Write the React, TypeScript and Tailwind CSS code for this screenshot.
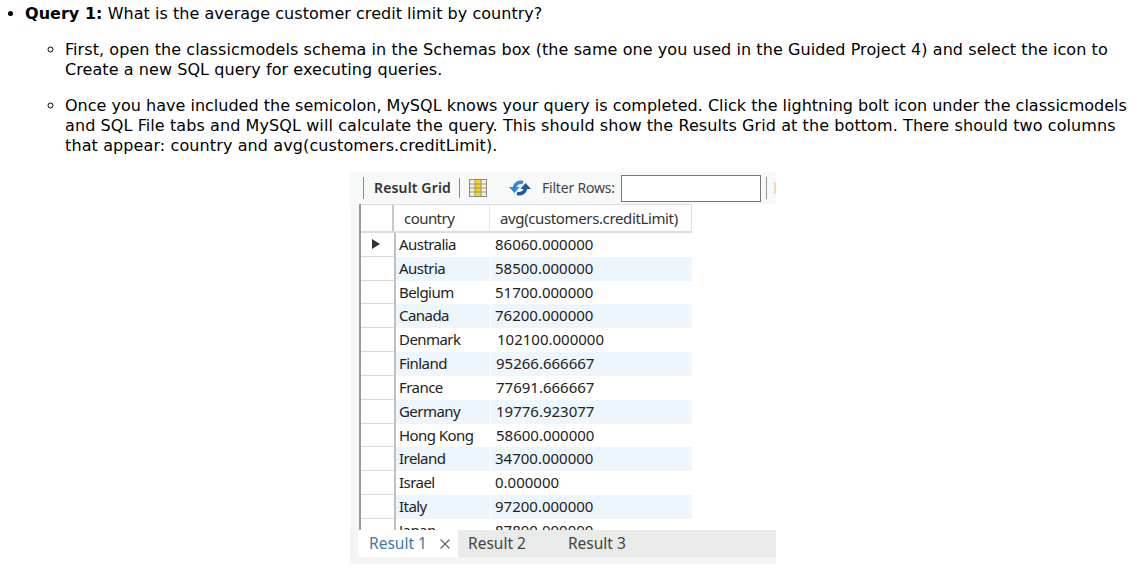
const rows: [string, string, string?][] = [
  ["Australia", "86060.000000"],
  ["Austria", "58500.000000"],
  ["Belgium", "51700.000000"],
  ["Canada", "76200.000000"],
  ["Denmark", "102100.000000", "ml-[2px]"],
  ["Finland", "95266.666667", "ml-[1px]"],
  ["France", "77691.666667", "ml-[1px]"],
  ["Germany", "19776.923077", "ml-[1px]"],
  ["Hong Kong", "58600.000000", "ml-[1px]"],
  ["Ireland", "34700.000000"],
  ["Israel", "0.000000"],
  ["Italy", "97200.000000"],
  ["Japan", "87800.000000"],
];

function Grid() {
  return (
    <div className="h-[326px] w-[333px] overflow-hidden border-l-2 border-[#9a9a9a] bg-white">
      <div className="flex h-[29px] border-y border-b-2 border-[#dcdcdc] text-[#333]">
        <div className="w-[33px] border-r-2 border-[#c8c8c8]" />
        <div className="w-[96px] border-r border-[#e4e4e4] pl-[10px] leading-[27px]">country</div>
        <div className="w-[202px] border-r border-[#dcdcdc] pl-[10px] leading-[27px] tracking-[-0.37px]">avg(customers.creditLimit)</div>
      </div>
      {rows.map(([c, v, cls], i) => (
        <div key={c} className="flex h-[23.83px] leading-[23px] text-[#222]">
          <div className="flex w-[33px] items-center justify-center border-b border-[#d9d9d9] pr-[4px]">
            {i === 0 && <div className="h-0 w-0 border-y-[5px] border-l-[8px] border-y-transparent border-l-[#333]" />}
          </div>
          <div className={`w-[96px] border-l-2 border-[#c0c0c0] pl-[3px] ${i % 2 === 1 ? "bg-[#edf5fd]" : ""}`}>{c}</div>
          <div className={`ml-[1px] w-[201px] pl-[4px] tracking-[0px] ${i % 2 === 1 ? "bg-[#edf5fd]" : ""}`}>
            <span className={cls}>{v}</span>
          </div>
        </div>
      ))}
    </div>
  );
}

function ColumnsIcon() {
  return (
    <svg width="18" height="18" viewBox="0 0 18 18" className="ml-[9px]">
      <rect x="0.5" y="0.5" width="17" height="17" fill="#f4f1e2" stroke="#8a8a80" />
      <rect x="6" y="1" width="6" height="16" fill="#f7d21c" />
      <path d="M1 5H17M1 9H17M1 13H17M6 1V17M12 1V17" stroke="#8f8f80" strokeWidth="0.9" fill="none" />
    </svg>
  );
}

function RefreshIcon() {
  return (
    <svg width="22" height="18" viewBox="0 0 22 18" className="ml-[22px]">
      <path d="M5.5 8.5 C6 5 9.5 2.5 14 3.5" stroke="#2f86dc" strokeWidth="3.6" fill="none" />
      <path d="M0 8 L10.5 8 L5.5 14 Z" fill="#2f86dc" />
      <path d="M16.5 9.5 C16 13 12.5 15.5 8 14.5" stroke="#1a5aa5" strokeWidth="3.6" fill="none" />
      <path d="M22 10 L11.5 10 L16.5 4 Z" fill="#1a5aa5" />
    </svg>
  );
}

function Shot() {
  return (
    <div className="ml-[350px] mt-[16px] w-[426px] font-['Noto_Sans',sans-serif] text-[15px] tracking-[-0.55px]">
      <div className="flex h-[32px] items-center bg-[#f7f8f8] pl-[13px]">
        <div className="h-[22px] w-px bg-[#888]" />
        <span className="ml-[10px] text-[14px] font-semibold tracking-[0.15px] text-[#333]">Result Grid</span>
        <div className="ml-[8px] h-[20px] w-px bg-[#888]" />
        <ColumnsIcon />
        <RefreshIcon />
        <span className="ml-[11px] text-[14px] tracking-[-0.2px] text-[#444]">Filter Rows:</span>
        <div className="ml-[6px] h-[27px] w-[140px] border border-[#777] bg-white" />
        <div className="ml-[5px] h-[22px] w-px bg-[#999]" />
        <div className="ml-[7px] h-[12px] w-[2px] bg-[#f0dcb0]" />
      </div>
      <div className="border-l-[9px] border-[#f6f7f7] bg-white"><Grid /></div>
      <div className="bg-[#f3f4f3] pb-[7px] pl-[8px]">
        <div className="flex h-[27px] items-center bg-[#e9ebe8] pb-[2px] text-[15.5px] tracking-[0px] text-[#444]">
          <div className="-mb-[2px] flex h-[27px] w-[100px] items-center bg-white pb-[2px] pl-[11px] text-[#3a7ca5]">
            Result 1
            <svg width="12" height="12" viewBox="0 0 12 12" className="ml-[12px] mt-[2px]">
              <path d="M1.5 1.5L10.5 10.5M10.5 1.5L1.5 10.5" stroke="#666" strokeWidth="1.2" />
            </svg>
          </div>
          <span className="ml-[10px]">Result 2</span>
          <span className="ml-[42px]">Result 3</span>
        </div>
      </div>
    </div>
  );
}

export default function App() {
  return (
    <div className="h-[574px] w-[1148px] overflow-hidden bg-white font-['DejaVu_Sans',sans-serif] text-[16px] leading-[20px] tracking-[0.07px] text-black">
      <ul className="list-disc pl-[25px] pt-[4px]">
        <li>
          <span className="tracking-[0.035px]"><b>Query 1:</b> What is the average customer credit limit by country?</span>
          <ul className="mt-[16px] list-[circle] pl-[40px]">
            <li>
              First, open the classicmodels schema in the Schemas box (the same one you used in the Guided Project 4) and select the icon to<br />
              Create a new SQL query for executing queries.
            </li>
            <li className="mt-[16px]">
              <span className="tracking-[0.01px]">Once you have included the semicolon, MySQL knows your query is completed. Click the lightning bolt icon under the classicmodels</span><br />
              <span className="tracking-[0.09px]">and SQL File tabs and MySQL will calculate the query. This should show the Results Grid at the bottom. There should two columns</span><br />
              <span className="tracking-[0.11px]">that appear: country and avg(customers.creditLimit).</span>
            </li>
          </ul>
        </li>
      </ul>
      <Shot />
    </div>
  );
}
